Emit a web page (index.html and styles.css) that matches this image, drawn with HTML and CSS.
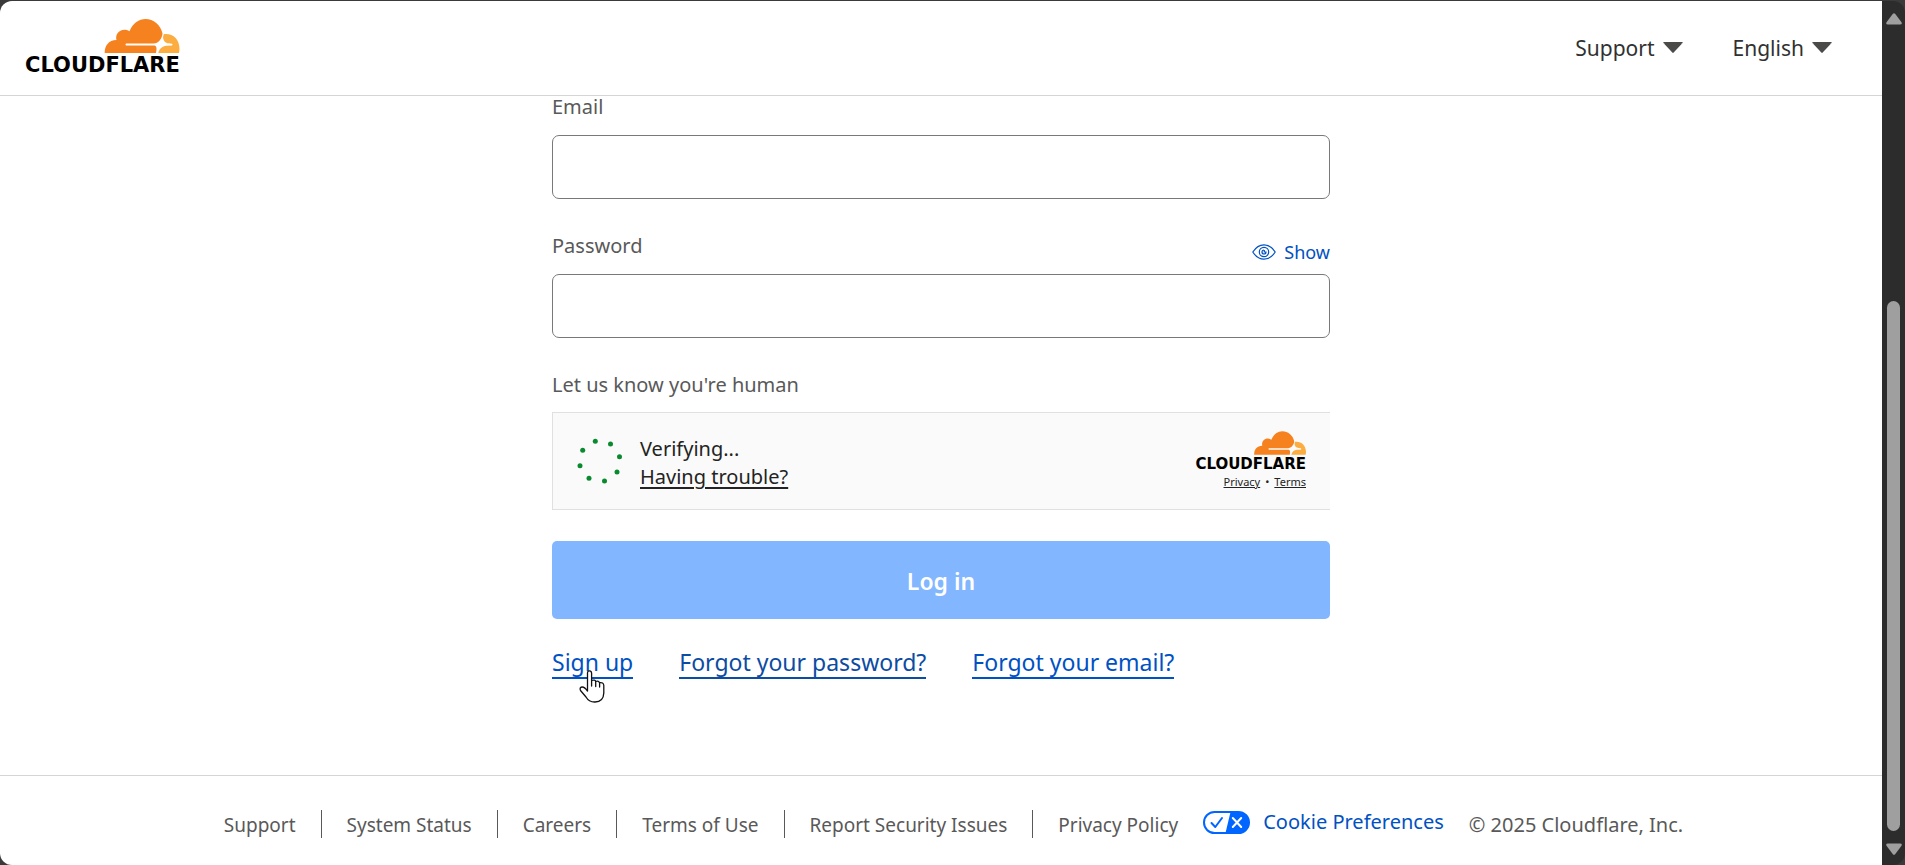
FILE: index.html
```html
<!DOCTYPE html>
<html lang="en">
<head>
<meta charset="utf-8">
<meta name="viewport" content="width=device-width, initial-scale=1">
<title>Log in | Cloudflare</title>
<link rel="stylesheet" href="styles.css">
</head>
<body>
<svg class="defs" aria-hidden="true">
  <symbol id="cloud" viewBox="0 0 75 34">
    <path fill="#f6821f" d="M0.200 34C0 27 4 21 12 21C10 14.500 17 7.500 25 12.200C28.500 4 34.500 0 41 0C49 0 56 5.500 58 14.500C57.500 20 54 24.200 49 24.600H21.500Q20.300 25.600 21.500 26.600H50C52 26.900 52.600 29.500 51.500 34Z"/>
    <path fill="#fbad41" d="M59.200 15.200C68 14 75.200 20 75 30.500L74.500 34H53.800C54.800 30 57.500 27 62 26.700L67.500 26.600Q68.800 25.600 67.500 24.700C63 24.500 60 24 58.800 20Q58.300 17.500 59.200 15.200Z"/>
  </symbol>
  <symbol id="caret" viewBox="0 0 20 12">
    <path fill="#4a4b49" d="M1 0H19Q20.500 0 19.300 1.300L10.700 10.600Q10 11.300 9.300 10.600L.7 1.300Q-.5 0 1 0Z"/>
  </symbol>
  <symbol id="arrow" viewBox="0 0 16 12">
    <path fill="#9f9f9f" d="M6.700 1Q8-.7 9.300 1L15.300 9Q16.800 11.500 14 11.500H2Q-.8 11.500.7 9Z"/>
  </symbol>
</svg>
<div class="window">
  <div class="page">
    <header class="header">
      <a class="brand" href="#">
        <svg class="brand-cloud"><use href="#cloud"/></svg>
        <span class="brand-name">CLOUDFLARE</span>
      </a>
      <nav class="header-nav">
        <button class="menu" type="button">Support <svg class="caret"><use href="#caret"/></svg></button>
        <button class="menu" type="button">English <svg class="caret"><use href="#caret"/></svg></button>
      </nav>
    </header>

    <main class="main">
      <form class="form">
        <div class="field">
          <label class="label" for="email">Email</label>
          <input class="input" id="email" type="email">
        </div>
        <div class="field">
          <div class="label-row">
            <label class="label" for="password">Password</label>
            <button class="show" type="button">
              <svg class="eye" viewBox="0 0 24 16" fill="none" stroke="#0051c3" stroke-width="1.200">
                <path d="M.8 8C4 3 7.800.8 12 .8S20 3 23.200 8C20 13 16.200 15.200 12 15.200S4 13 .8 8Z"/>
                <circle cx="12" cy="8" r="4.700"/>
                <path d="M12 6A2 2 0 1 0 14 8H12.300V6"/>
              </svg>
              Show
            </button>
          </div>
          <input class="input" id="password" type="password">
        </div>
        <p class="label">Let us know you're human</p>
        <section class="widget">
          <svg class="spinner" viewBox="0 0 48 48" fill="#0a8a2f">
            <circle cx="19.300" cy="4.300" r="2.500"/><circle cx="34.500" cy="7" r="2.500"/>
            <circle cx="43.500" cy="19.700" r="2.500"/><circle cx="41" cy="35" r="2.500"/>
            <circle cx="28.500" cy="44" r="2.500"/><circle cx="13" cy="41.300" r="2.500"/>
            <circle cx="4" cy="28.700" r="2.500"/><circle cx="6.700" cy="13.300" r="2.500"/>
          </svg>
          <div class="status">
            <span>Verifying...</span>
            <a class="trouble" href="#">Having trouble?</a>
          </div>
          <div class="badge">
            <svg class="badge-cloud"><use href="#cloud"/></svg>
            <span class="badge-name">CLOUDFLARE</span>
            <div class="badge-links"><a href="#">Privacy</a><span>•</span><a href="#">Terms</a></div>
          </div>
        </section>
        <button class="submit" type="submit">Log in</button>
        <nav class="links">
          <a class="link" href="#">Sign up
            <svg class="pointer" viewBox="0 0 26 33" fill="#fff" stroke="#111" stroke-width="1.300" stroke-linejoin="round" stroke-linecap="round">
              <path d="M8.500 19V3.200Q8.500 .8 10.500 .8T12.600 3.200V10.500Q16 9.300 16.700 11.500Q19.700 10.500 20.500 12.700Q24.500 12 24.800 15.500V23Q24.500 31.800 16 32Q10 32.200 7 27L1.500 20.500Q.2 17.500 3 17Q5.500 16.800 8.500 21Z"/>
              <path d="M12.600 10.500V16M16.700 11.500V16.500M20.600 12.700V17" fill="none"/>
            </svg>
          </a>
          <a class="link link-dark" href="#">Forgot your password?</a>
          <a class="link" href="#">Forgot your email?</a>
        </nav>
      </form>
    </main>

    <footer class="footer">
      <a class="foot-link" href="#">Support</a>
      <a class="foot-link" href="#">System Status</a>
      <a class="foot-link" href="#">Careers</a>
      <a class="foot-link" href="#">Terms of Use</a>
      <a class="foot-link" href="#">Report Security Issues</a>
      <a class="foot-link foot-last" href="#">Privacy Policy</a>
      <button class="cookies" type="button">
        <svg class="toggle" viewBox="0 0 47 23">
          <rect x="1" y="1" width="45" height="21" rx="10.500" fill="#fff" stroke="#06f" stroke-width="2"/>
          <path fill="#06f" d="M27.500 1H35.500A10.500 10.500 0 0 1 35.500 22H22.500Z"/>
          <path d="M8.500 12L12.300 16L19 7" fill="none" stroke="#06f" stroke-width="2" stroke-linecap="round" stroke-linejoin="round"/>
          <path d="M29.800 7L38.200 16M38.200 7L29.800 16" stroke="#fff" stroke-width="2" stroke-linecap="round"/>
        </svg>
        Cookie Preferences
      </button>
      <span class="copyright">© 2025 Cloudflare, Inc.</span>
    </footer>
  </div>
  <div class="scrollbar" aria-hidden="true">
    <svg class="arrow"><use href="#arrow"/></svg>
    <div class="track"><div class="thumb"></div></div>
    <svg class="arrow arrow-down"><use href="#arrow"/></svg>
  </div>
</div>
</body>
</html>
```

FILE: styles.css
```css
* { box-sizing: border-box; }

body {
  margin: 0;
  background: #3a3a3a;
  color: #313131;
  font-family: "Noto Sans", "Open Sans", sans-serif;
  font-size: 20px;
  line-height: 20px;
}

button {
  border: 0;
  padding: 0;
  background: none;
  color: inherit;
  font: inherit;
}

a { color: inherit; text-decoration: none; }
p { margin: 0; }
.defs { position: absolute; width: 0; height: 0; }

.window { display: flex; min-height: 100vh; padding-top: 1px; }
.page {
  flex: 1;
  display: flex;
  flex-direction: column;
  background: #fff;
  border-radius: 12px 0 0 12px;
}

.header {
  display: flex;
  align-items: center;
  justify-content: space-between;
  padding: 18px 50px 21px 25px;
  border-bottom: 1px solid #d5d5d5;
}
.brand { display: flex; flex-direction: column; align-items: flex-end; gap: 4px; color: #000; }
.brand-cloud { width: 76px; height: 34px; }
.brand-name { font: bold 21px/17px "DejaVu Sans", sans-serif; }
.header-nav { display: flex; gap: 50px; padding-top: 2px; }
.menu { display: flex; align-items: center; gap: 8px; font-size: 21px; line-height: 28px; }
.caret { width: 20px; height: 12px; }

.main { flex: 1; padding: 0 24px; }
.form { display: flex; flex-direction: column; max-width: 778px; margin: 0 auto; }
.field { display: flex; flex-direction: column; gap: 17px; margin-bottom: 36px; }
.label { color: #595959; line-height: 22px; }
.label-row { display: flex; justify-content: space-between; align-items: flex-start; height: 22px; }
.show { display: flex; align-items: center; gap: 8px; padding-top: 7px; color: #0051c3; font-size: 18px; }
.eye { width: 24px; height: 16px; }
.input {
  width: 100%;
  padding: 15px 16px;
  border: 1px solid #797979;
  border-radius: 7px;
  background: #fff;
  font: inherit;
  line-height: 32px;
  height: 64px;
}

.widget {
  display: flex;
  align-items: center;
  margin-top: 16px;
  padding: 18px 24px 18px 23px;
  border: 1px solid #e0e0e0;
  border-right: 0;
  background: #fafafa;
}
.spinner { width: 48px; height: 48px; margin-right: 16px; }
.status { display: flex; flex-direction: column; align-items: flex-start; flex: 1; padding-top: 4px; line-height: 28px; color: #232323; }
.trouble { text-decoration: underline 2px; text-underline-offset: 3px; }
.badge { display: flex; flex-direction: column; align-items: flex-end; gap: 3px; color: #000; }
.badge-cloud { width: 52px; height: 24px; }
.badge-name { font: bold 15px/12px "DejaVu Sans", sans-serif; }
.badge-links { display: flex; gap: 5px; font-size: 11px; line-height: 18px; color: #232323; }
.badge-links a { text-decoration: underline; }

.submit {
  margin-top: 31px;
  padding: 24px 23px 22px;
  border-radius: 5px;
  background: #82b6ff;
  color: #fff;
  font-size: 23px;
  font-weight: 600;
  line-height: 32px;
}

.links { display: flex; gap: 46px; margin-top: 29px; font-size: 23px; line-height: 28px; }
.link { position: relative; padding-bottom: 1px; color: #0051c3; border-bottom: 2px solid; }
.link-dark { color: #0c4ca3; }
.pointer { position: absolute; left: 27px; top: 22px; width: 26px; height: 33px; }

.footer {
  display: flex;
  align-items: center;
  justify-content: center;
  flex-wrap: wrap;
  padding: 34px 0 27px 25px;
  border-top: 1px solid #d5d5d5;
  color: #595959;
}
.foot-link { padding: 5px 25px 3px 0; margin-right: 25px; border-right: 1px solid #595959; font-size: 19px; }
.foot-last { border-right: 0; margin-right: 0; }
.cookies { display: flex; align-items: center; gap: 13px; padding-bottom: 4px; margin-right: 25px; color: #0051c3; }
.toggle { width: 47px; height: 23px; }
.copyright { padding-top: 2px; }

.scrollbar {
  display: flex;
  flex-direction: column;
  align-items: center;
  width: 23px;
  padding: 12px 0 10px;
  border-radius: 0 12px 12px 0;
  background: #2c2c2c;
}
.arrow { width: 16px; height: 12px; }
.arrow-down { transform: rotate(180deg); }
.track { flex: 1; display: flex; padding: 276px 0 12px; }
.thumb { width: 13px; border-radius: 7px; background: #9f9f9f; }
```
